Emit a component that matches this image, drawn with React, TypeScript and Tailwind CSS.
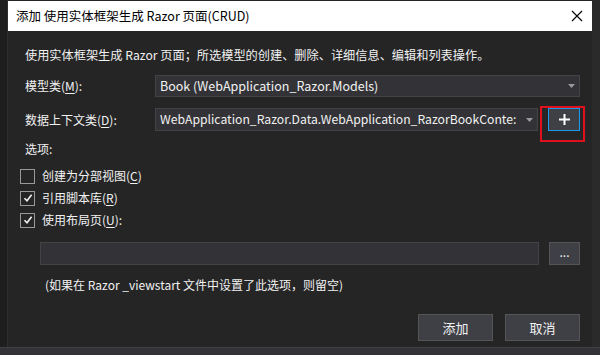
import React from "react";

const font = { fontFamily: '"Noto Sans CJK SC", "Noto Sans", sans-serif' };

const Mn = ({ c }: { c: string }) => <span className="underline underline-offset-2">{c}</span>;

const Arrow = () => (
  <svg width="7" height="4" viewBox="0 0 7 4" className="shrink-0">
    <path d="M0 0h7L3.5 4z" fill="#999999" />
  </svg>
);

const Check = ({ checked }: { checked: boolean }) => (
  <div className="w-[15px] h-[15px] border border-[#999999] bg-[#252526] flex items-center justify-center shrink-0">
    {checked && (
      <svg width="10" height="10" viewBox="0 0 10 10">
        <path d="M1.5 5.2 L4 7.8 L8.6 1.8" stroke="#f1f1f1" strokeWidth="1.6" fill="none" />
      </svg>
    )}
  </div>
);

const options = [
  { label: "创建为分部视图(", key: "C", tail: ")", checked: false },
  { label: "引用脚本库(", key: "R", tail: ")", checked: true },
  { label: "使用布局页(", key: "U", tail: "):", checked: true },
];

export default function App() {
  return (
    <div className="w-[600px] h-[355px] bg-[#1e1e1e] flex flex-col overflow-hidden text-[12px] text-[#f1f1f1]" style={font}>
      <div className="flex h-[347px]">
        <div className="w-[8px] bg-[#1e1e1e] border-r border-[#2d2d30]" />
        <div className="w-[584px] flex flex-col bg-[#252526]">
          <div className="mt-px h-[30px] bg-white text-black flex items-center pl-[8px] pr-[9px]">
            <span className="text-[12.5px] flex-1">添加 使用实体框架生成 Razor 页面(CRUD)</span>
            <svg width="12" height="12" viewBox="0 0 12 12">
              <path d="M1 1 L11 11 M11 1 L1 11" stroke="#000" strokeWidth="1.1" />
            </svg>
          </div>

          <div className="flex flex-col pl-[17px] pr-[12px]">
            <div className="mt-[16px] h-[16px] leading-[16px] text-[12.2px]">
              使用实体框架生成 Razor 页面；所选模型的创建、删除、详细信息、编辑和列表操作。
            </div>

            <div className="mt-[12px] h-[22px] flex items-center">
              <span className="w-[130px]">模型类(<Mn c="M" />):</span>
              <div className="flex-1 h-full bg-[#333337] border border-[#434346] flex items-center pl-[4px] pr-[4px]">
                <span className="flex-1 text-[12.5px]">Book (WebApplication_Razor.Models)</span>
                <Arrow />
              </div>
            </div>

            <div className="mt-[11px] h-[23px] flex items-center relative">
              <span className="w-[130px]">数据上下文类(<Mn c="D" />):</span>
              <div className="w-[383px] h-full bg-[#333337] border border-[#434346] flex items-center pl-[4px] pr-[4px]">
                <span className="flex-1 text-[12.2px] whitespace-nowrap">WebApplication_Razor.Data.WebApplication_RazorBookConte:</span>
                <Arrow />
              </div>
              <button className="ml-[10px] w-[32px] h-full bg-[#3f3f46] border border-[#1c97ea] flex items-center justify-center">
                <svg width="11" height="11" viewBox="0 0 11 11">
                  <path d="M5.5 0v11M0 5.5h11" stroke="#ffffff" strokeWidth="2" />
                </svg>
              </button>
              <div className="absolute left-[515px] -top-[2px] w-[45px] h-[36px] border-2 border-[#e0101c]" />
            </div>

            <div className="mt-[10px] h-[16px] leading-[16px]">选项:</div>

            <div className="mt-[8px] flex flex-col">
              {options.map((o) => (
                <div key={o.key} className="h-[22px] flex items-center -ml-[5px]">
                  <Check checked={o.checked} />
                  <span className="ml-[7px]">
                    {o.label}
                    <Mn c={o.key} />
                    {o.tail}
                  </span>
                </div>
              ))}
            </div>

            <div className="mt-[11px] h-[23px] flex ml-[15px]">
              <div className="w-[499px] h-full bg-[#333337] border border-[#434346]" />
              <button className="ml-[10px] flex-1 h-full bg-[#3f3f46] border border-[#555555] text-[12px] leading-none pb-[4px]">...</button>
            </div>

            <div className="mt-[12px] h-[16px] leading-[16px] ml-[20px]">
              (如果在 Razor _viewstart 文件中设置了此选项，则留空)
            </div>

            <div className="mt-[21px] h-[27px] flex justify-end gap-[12px]">
              <button className="w-[75px] h-full bg-[#3f3f46] border border-[#555555] text-[13px]">添加</button>
              <button className="w-[75px] h-full bg-[#3f3f46] border border-[#555555] text-[13px]">取消</button>
            </div>
          </div>
        </div>
        <div className="flex-1 bg-[#2a2a2b]" />
      </div>
      <div className="flex-1 bg-[#333337] border-t border-[#3f3f46]" />
    </div>
  );
}
